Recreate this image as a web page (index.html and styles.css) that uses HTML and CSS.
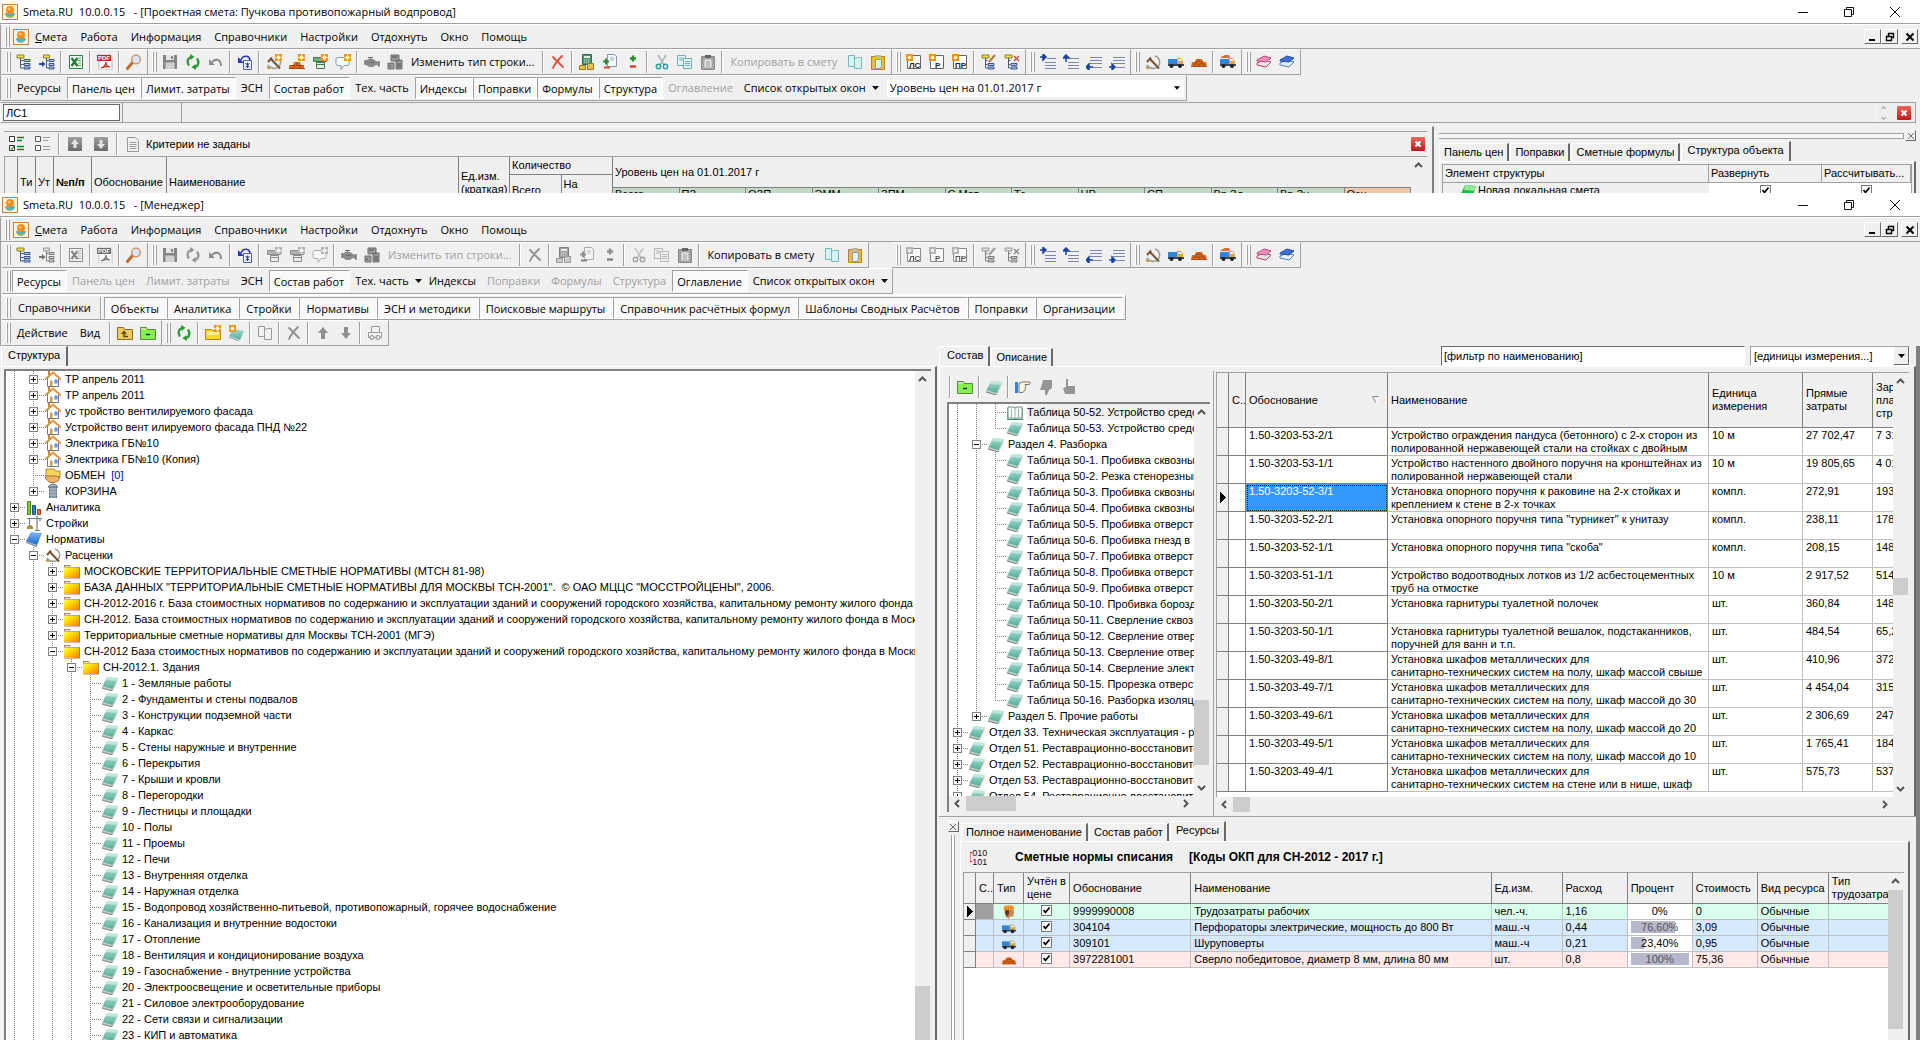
FILE: index.html
```html
<!DOCTYPE html>
<html lang="ru">
<head>
<meta charset="utf-8">
<title>Smeta.RU</title>
<link rel="stylesheet" href="styles.css">
</head>
<body>
<svg class="defs" aria-hidden="true">
<defs>
<linearGradient id="g-fold" x1="0" y1="0" x2="1" y2="1"><stop offset="0" stop-color="#ffff5a"/><stop offset=".4" stop-color="#ffd800"/><stop offset="1" stop-color="#ff7a00"/></linearGradient>
<linearGradient id="g-book" x1="0" y1="0" x2="0" y2="1"><stop offset="0" stop-color="#a9dccd"/><stop offset="1" stop-color="#4fae98"/></linearGradient>
<linearGradient id="g-blue" x1="0" y1="0" x2="0" y2="1"><stop offset="0" stop-color="#7db8f5"/><stop offset="1" stop-color="#1b66d0"/></linearGradient>
<linearGradient id="g-red" x1="0" y1="0" x2="0" y2="1"><stop offset="0" stop-color="#e86a5c"/><stop offset="1" stop-color="#c01818"/></linearGradient>
<linearGradient id="g-gray" x1="0" y1="0" x2="0" y2="1"><stop offset="0" stop-color="#a0a0a0"/><stop offset="1" stop-color="#6a6a6a"/></linearGradient>
</defs>
<symbol id="logo" viewBox="0 0 16 16"><rect x=".5" y=".5" width="15" height="15" fill="#fff3e2" stroke="#c8803c"/><path d="M3 9a5 5 0 0 0 10 0z" fill="#4fb3c0"/><path d="M5 12q3 3 6 0" fill="#8cc63f"/><circle cx="8" cy="6" r="4" fill="#ff8c1a"/><circle cx="7" cy="5" r="1.5" fill="#ffc36b"/></symbol>
<symbol id="tree" viewBox="0 0 16 16"><path d="M1 1h7v3H1z" fill="#e8e04a" stroke="#8a8420"/><path d="M4.500 4v10M4.500 6.500h3M4.500 10.500h3M4.500 14h3" stroke="#4a5a78" fill="none"/><path d="M8 5.500h6v2H8zM8 9.500h6v2H8zM8 13h6v2H8z" fill="#b9cbe8" stroke="#3a5590"/></symbol>
<symbol id="treein" viewBox="0 0 16 16"><path d="M4.500 1h6v3h-6z" fill="#e8e04a" stroke="#8a8420"/><path d="M7.500 4v10M7.500 6.500h2M7.500 14h2" stroke="#4a5a78" fill="none"/><path d="M10 5.500h5v2h-5zM10 9.500h5v2h-5zM10 13h5v2h-5z" fill="#b9cbe8" stroke="#3a5590"/><path d="M0 9h3V7l3.500 3L3 13v-2H0z" fill="#1d4fa8"/></symbol>
<symbol id="xls" viewBox="0 0 16 16"><path d="M1.500 1.500h13v13h-13z" fill="#eef7ee" stroke="#2f7d46"/><path d="M10 4h3M10 6.500h3M10 9h3M10 11.500h3" stroke="#58a36c"/><path d="M3.500 4l6 8M9.500 4l-6 8" stroke="#1e7a3a" stroke-width="2.200"/></symbol>
<symbol id="pdf" viewBox="0 0 16 16"><path d="M2 0h10l3 3v13H2z" fill="#fff" stroke="#bbb"/><path d="M0 1h14v6H0z" fill="#cc1f1f"/><text x="1" y="6" font-size="6" font-weight="700" fill="#fff">PDF</text><path d="M4 14c3-1 5-3 5-6 0 4 2 5 4 5-3-1-6 0-9 1z" fill="none" stroke="#cc1f1f" stroke-width="1.200"/></symbol>
<symbol id="find" viewBox="0 0 16 16"><path d="M1.500 14.500l5-6" stroke="#c26a28" stroke-width="3" stroke-linecap="round"/><circle cx="10" cy="5.500" r="4.300" fill="#d6e6fa" stroke="#d08a5a" stroke-width="1.300"/></symbol>
<symbol id="save" viewBox="0 0 16 16"><path d="M1 1h14v14H1z" fill="#858585"/><path d="M4 1h8v5H4z" fill="#e4e4e4"/><path d="M9 2h2v3H9z" fill="#858585"/><path d="M3.500 8.500h9V15h-9z" fill="#d0d0d0"/></symbol>
<symbol id="refresh" viewBox="0 0 16 16"><path d="M6 3C2.500 4 1.500 8 4 11.500M10 13c3.500-1 4.500-5 2-8.500" fill="none" stroke="#279a33" stroke-width="2.300"/><path d="M5 0l4.500 2.800L5.500 6zM11 16l-4.500-2.800L10.500 10z" fill="#279a33"/></symbol>
<symbol id="undo" viewBox="0 0 16 16"><path d="M4 8c4-4 9-3 9 4" fill="none" stroke="#8a8a8a" stroke-width="2"/><path d="M1 5v6h6z" fill="#8a8a8a"/></symbol>
<symbol id="undodoc" viewBox="0 0 16 16"><path d="M6.500 6.500h8v9h-8z" fill="#eef3ff" stroke="#5560a0"/><path d="M8.500 9l4 4.500M12.500 9l-4 4.500M10.500 8.500v5.500" stroke="#30407a"/><path d="M4 6c2-5 8-5 9 0" fill="none" stroke="#2a35c8" stroke-width="1.700"/><path d="M1 3v6h6z" fill="#2a35c8"/></symbol>
<symbol id="sun" viewBox="0 0 16 16"><path d="M9 0h7v7H9z" fill="#f5921e"/><circle cx="12.500" cy="3.500" r="2" fill="#fff3c0"/><path d="M12.500 0v7M9 3.500h7" stroke="#fff3c0" stroke-width=".7"/></symbol>
<symbol id="hammer" viewBox="0 0 16 16"><path d="M10 2c6 2 6 9 1 12-4 1-7 0-9-3" fill="none" stroke="#9a9f9a" stroke-width="1.500"/><path d="M5 5l9 9.500M6 3.500L2 8" stroke="#7a5433" stroke-width="2"/><path d="M1 13l3 1.500" stroke="#c59a4a" stroke-width="2"/></symbol>
<symbol id="hammernew" viewBox="0 0 16 16"><use href="#hammer"/><use href="#sun"/></symbol>
<symbol id="bricks" viewBox="0 0 16 16"><path d="M5 5h6l1 3h3l1 4.500H0L1 8h3z" fill="#e06c1c"/><path d="M0 12.500h16M2 10h12M4 7.500h8M8 5v3M5 8v2M11 8v2M3 10v2.500M8 10v2.500M13 10v2.500" stroke="#a8420a" stroke-width=".9"/></symbol>
<symbol id="bricksnew" viewBox="0 0 16 16"><path d="M5 8h6l1 3h3v4H0v-4h4z" fill="#e06c1c"/><path d="M0 14.500h16M2 11.500h12M8 8v3M5 11v3M11 11v3" stroke="#a8420a"/><use href="#sun"/></symbol>
<symbol id="shelf" viewBox="0 0 16 16"><path d="M1.500 3.500h13v4h-13z" fill="#6fae7a" stroke="#3f7a4c"/><path d="M4.500 8.500h8v6h-8z" fill="#e5eee6" stroke="#3f7a4c"/><path d="M4 10.500h9" stroke="#3f7a4c"/><use href="#sun"/></symbol>
<symbol id="note" viewBox="0 0 16 16"><path d="M3 3.500h9q2 0 2 2v4q0 2-2 2H9l-3 4v-4H3q-2 0-2-2v-4q0-2 2-2z" fill="#f6fbff" stroke="#8a9aa5"/><use href="#sun"/></symbol>
<symbol id="engine" viewBox="0 0 16 16"><path d="M1 7l3-2h5l3 2 3 1v4l-3-1-3 2H5l-4-3z" fill="#8c8c8c"/><path d="M4 3.500h5M6.500 3v2M1 6v5M5 8.500h5M15 7v6" stroke="#6a6a6a" stroke-width="1.200"/></symbol>
<symbol id="machine" viewBox="0 0 16 16"><path d="M4 1h8v6H4zM1 9h6v6H1zM9 6h6v9H9z" fill="#9a9a9a" stroke="#6f6f6f"/><path d="M5 3h5M3 11v2M11 9v5M13 9v5" stroke="#555"/></symbol>
<symbol id="del" viewBox="0 0 16 16"><path d="M3 3c3 3 6 6 10 10M12 2C8 6 5 9 3 14" fill="none" stroke="#e2503a" stroke-width="1.800" stroke-linecap="round"/></symbol>
<symbol id="calc" viewBox="0 0 16 16"><path d="M3.500.5h9v10h-9z" fill="#4e9a78" stroke="#2f6b50"/><path d="M5 2h6v2H5z" fill="#dff0da"/><path d="M5 6h6M5 8h6" stroke="#dff0da" stroke-dasharray="1 1"/><path d="M.5 11.500h6v4h-6zM8.500 9.500h6v6h-6z" fill="#e9c04a" stroke="#9a7a1e"/></symbol>
<symbol id="docpm" viewBox="0 0 16 16"><path d="M5.500.5h7l2 2v10h-9z" fill="#f4f7fb" stroke="#8a95a5"/><path d="M8 4h4M8 6h4" stroke="#9fb0c5"/><path d="M1 7.500h6M4 4.500v6" stroke="#2e8a2e" stroke-width="2"/><path d="M2 13.500h6" stroke="#d04a20" stroke-width="2"/></symbol>
<symbol id="pm" viewBox="0 0 16 16"><path d="M5 4.500h6M8 1.500v6" stroke="#2e8a2e" stroke-width="2.400"/><path d="M5 12.500h6" stroke="#c8402a" stroke-width="2.400"/></symbol>
<symbol id="cut" viewBox="0 0 16 16"><path d="M4 1l6 10M12 1L6 11" stroke="#a5b5b5" stroke-width="1.500"/><circle cx="4.500" cy="12.500" r="2.200" fill="none" stroke="#2aa0a8" stroke-width="1.400"/><circle cx="11.500" cy="12.500" r="2.200" fill="none" stroke="#2aa0a8" stroke-width="1.400"/></symbol>
<symbol id="copy" viewBox="0 0 16 16"><path d="M.5 1.500h8v10h-8z" fill="#e6f4f4" stroke="#6fb0b5"/><path d="M6.500 4.500h8v10h-8z" fill="#e6f4f4" stroke="#6fb0b5"/><path d="M8 7.500h5M8 9.500h5M8 11.500h5M2 4h4M2 6h4" stroke="#6fb0b5"/></symbol>
<symbol id="pasteg" viewBox="0 0 16 16"><path d="M1.500 2.500h13v13h-13z" fill="#a4a4a4" stroke="#888"/><path d="M5 1h6v3H5z" fill="#666"/><path d="M4.500 5.500h7v8h-7z" fill="#e6e6e6"/><path d="M6 8h4M6 10h4M6 12h4" stroke="#999"/></symbol>
<symbol id="copy2" viewBox="0 0 16 16"><path d="M1.500 1.500h6v11h-6zM7.500 4.500l3-1h4v11h-7z" fill="#d4f3f3" stroke="#74b8bc"/></symbol>
<symbol id="paste2" viewBox="0 0 16 16"><path d="M1.500 2.500h13v13h-13z" fill="#f1b93a" stroke="#b98218"/><path d="M5 1h6v3H5z" fill="#b9b9a0"/><path d="M5.500 5.500h6v7l-2 2h-4z" fill="#dff2f2" stroke="#7ba3a3"/></symbol>
<symbol id="docnew" viewBox="0 0 16 16"><path d="M1.500 1.500h13v13h-13z" fill="#fff" stroke="#666"/><path d="M0 0h7v7H0z" fill="#f5921e"/><circle cx="3.500" cy="3.500" r="1.800" fill="#fff3c0"/></symbol>
<symbol id="treeedit" viewBox="0 0 16 16"><path d="M1 1h7v3H1z" fill="#e8e04a" stroke="#8a8420"/><path d="M4.500 4v10h2M4.500 6.500h2M4.500 10.500h2" stroke="#4a5a78" fill="none"/><path d="M7 9.500h6v2H7zM7 13h6v2H7z" fill="#b9cbe8" stroke="#3a5590"/><path d="M8 8l6-7" stroke="#b5762a" stroke-width="2"/></symbol>
<symbol id="treedel" viewBox="0 0 16 16"><path d="M1 1h7v3H1z" fill="#e8e04a" stroke="#8a8420"/><path d="M4.500 4v10h2M4.500 6.500h2M4.500 10.500h2" stroke="#4a5a78" fill="none"/><path d="M7 9.500h6v2H7zM7 13h6v2H7z" fill="#b9cbe8" stroke="#3a5590"/><path d="M10 2l5 5M15 2l-5 5" stroke="#d8382a" stroke-width="1.200"/></symbol>
<symbol id="ind1" viewBox="0 0 16 16"><path d="M7 4.500h9M5 8.500h11M5 11.500h11M5 14.500h11" stroke="#7d86a8"/><path d="M0 3h4M3 0l3 3-3 3z" stroke="#1c3fa8" stroke-width="1.500" fill="#1c3fa8"/></symbol>
<symbol id="ind2" viewBox="0 0 16 16"><path d="M7 4.500h9M5 8.500h11M5 11.500h11M5 14.500h11" stroke="#7d86a8"/><path d="M0 4l3-3 3 3zM3 3v5" stroke="#1c3fa8" stroke-width="1.500" fill="#1c3fa8"/></symbol>
<symbol id="ind3" viewBox="0 0 16 16"><path d="M4 3.500h12M4 6.500h12M4 9.500h12M7 13.500h9" stroke="#7d86a8"/><path d="M3 10l-3 3 3 3zM3 13h4" stroke="#1c3fa8" stroke-width="1.500" fill="#1c3fa8"/></symbol>
<symbol id="ind4" viewBox="0 0 16 16"><path d="M4 3.500h12M4 6.500h12M4 9.500h12M7 13.500h9" stroke="#7d86a8"/><path d="M3 10l3 3-3 3zM0 13h4" stroke="#1c3fa8" stroke-width="1.500" fill="#1c3fa8"/></symbol>
<symbol id="truck" viewBox="0 0 16 16"><path d="M0 5h9v5H0z" fill="#2f86d8"/><path d="M9 4h4l2 3v4H9z" fill="#d8a843"/><path d="M10 5h3l1 2h-4z" fill="#e8f4ff"/><path d="M0 10h16v2H0z" fill="#3b4a5a"/><circle cx="3.500" cy="12" r="2" fill="#222"/><circle cx="12" cy="12" r="2" fill="#222"/></symbol>
<symbol id="truck2" viewBox="0 0 16 16"><path d="M1 3l4-2h4l1 3H1z" fill="#e06c1c"/><use href="#truck"/></symbol>
<symbol id="stackr" viewBox="0 0 16 16"><path d="M1 9l7-3 7 2-5 5-9-2z" fill="#e4e6f2" stroke="#c0405a"/><path d="M1 6l7-4 7 2-5 4-9-1z" fill="#f291b8" stroke="#c04a78"/></symbol>
<symbol id="stackb" viewBox="0 0 16 16"><path d="M1 9l7-3 7 2-5 5-9-2z" fill="#e4eefa" stroke="#4a7fc0"/><path d="M1 6l7-4 7 2-5 4-9-1z" fill="#3f6fd8" stroke="#2a4aa0"/></symbol>
<symbol id="foldup" viewBox="0 0 16 16"><path d="M.5 2.500h6l1 2h8v10H.5z" fill="#f0cc5e" stroke="#8a6d20"/><path d="M11 11.500H7V8M4.800 9L7 6.500 9.200 9" fill="none" stroke="#5a4410" stroke-width="1.400"/></symbol>
<symbol id="foldminus" viewBox="0 0 16 16"><path d="M.5 2.500h6l1 2h8v10H.5z" fill="#84f04e" stroke="#5a8a40"/><path d="M1 3h5l1 2H1z" fill="#c9dfc0"/><path d="M6 9.500h4" stroke="#222" stroke-width="1.400"/></symbol>
<symbol id="foldernew" viewBox="0 0 16 16"><path d="M.5 4.500h6l1 1h8v9H.5z" fill="#ffd52e" stroke="#b08a10"/><path d="M2 7h12v3H2z" fill="#fff1a0"/><use href="#sun"/></symbol>
<symbol id="book" viewBox="0 0 16 16"><path d="M0 12l1-2 9 3 5-9 1 1-5 11-11-3z" fill="#c9ccc9"/><path d="M0 13l10.500 3" stroke="#6f7f7a" fill="none"/><path d="M5 2l11 1-5.500 11L.5 11z" fill="url(#g-book)"/><path d="M5 2l11 1-1.500 3L4 5z" fill="#cdeee4" opacity=".7"/></symbol>
<symbol id="bookblue" viewBox="0 0 16 16"><path d="M0 11l11 4.500" stroke="#9aa3ad" stroke-width="2"/><path d="M5 1l11 1-5 12L0 10z" fill="url(#g-blue)"/></symbol>
<symbol id="booknew" viewBox="0 0 16 16"><path d="M5 4l11 2-4 9-11-4z" fill="url(#g-book)"/><path d="M1 12l10 4" stroke="#8b9a95"/><path d="M1 0h7v7H1z" fill="#f5921e"/><circle cx="4.500" cy="3.500" r="2" fill="#fff3c0"/></symbol>
<symbol id="open" viewBox="0 0 16 16"><path d="M1 3h5l2 1 2-1h5v11h-5l-2 1-2-1H1z" fill="#fff" stroke="#5f8f82"/><path d="M8 4v11M4.500 5v8M11.500 5v8" stroke="#8fb5aa"/><path d="M0 4v11.500h16V4" fill="none" stroke="#3f8a76"/></symbol>
<symbol id="pages" viewBox="0 0 16 16"><path d="M1.500 1.500h6v10h-6zM7.500 4.500l3-1h4v11h-7z" fill="#f2f2f2" stroke="#9a9a9a"/></symbol>
<symbol id="up" viewBox="0 0 16 16"><path d="M8 2l5 6h-3v6H6V8H3z" fill="#8f8f8f"/></symbol>
<symbol id="down" viewBox="0 0 16 16"><path d="M8 14l5-6h-3V2H6v6H3z" fill="#8f8f8f"/></symbol>
<symbol id="print" viewBox="0 0 16 16"><path d="M4.500 7V1.500h8V7M1.500 7.500h13v5h-13z" fill="#f2f2f2" stroke="#999"/><circle cx="5" cy="12.500" r="2" fill="#eee" stroke="#888"/><circle cx="11" cy="12.500" r="2" fill="#eee" stroke="#888"/></symbol>
<symbol id="house" viewBox="0 0 16 16"><path d="M2.500 7v8.500h11V7L8 2z" fill="#fff" stroke="#777"/><path d="M3 0h2v4H3z" fill="#c8803c"/><path d="M0 8.500L8 1.500l8 7" fill="none" stroke="#e0963c" stroke-width="1.700"/><path d="M5 9.500h2.500V15H5z" fill="#d99a48"/><path d="M9.500 8.500h3v4h-3z" fill="#5a90dd"/></symbol>
<symbol id="hand" viewBox="0 0 16 16"><path d="M1 2h8l2 2h4v6H1z" fill="#f6d45c" stroke="#b98b20"/><path d="M0 9h10l5 1-2 4-4 1.500H5L1 12z" fill="#f0b468" stroke="#a8702a"/></symbol>
<symbol id="bin" viewBox="0 0 16 16"><path d="M4 4h8v11H4z" fill="#5d6e80"/><path d="M4 6h8M4 9h8M4 12h8M6 4v11M8 4v11M10 4v11" stroke="#c7d2dc" stroke-width=".8"/><path d="M3 4q5-6 10 0z" fill="#a9bac8" stroke="#5d6e80"/></symbol>
<symbol id="chart" viewBox="0 0 16 16"><path d="M1.500 2.500h3v13h-3z" fill="#7fcf28" stroke="#4a8a10"/><path d="M6.500 6.500h3v9h-3z" fill="#2f7de0" stroke="#1c4f98"/><path d="M11.500 10.500h3v5h-3z" fill="#f06a48" stroke="#b03a1e"/></symbol>
<symbol id="crane" viewBox="0 0 16 16"><path d="M1 3.500h15M11 1v14M3.500 3.500v6M9 15.500h5M14 3v3" stroke="#6f7f86" stroke-width="1.200" fill="none"/><path d="M1 12l2-2h2l2 2v2H1z" fill="#b0883a"/></symbol>
<symbol id="folder" viewBox="0 0 16 16"><path d="M0 2h6l1 2h9v11.500H0z" fill="#9a8a5a"/><path d="M1 3h5l1 1H1z" fill="#e8dcb0"/><path d="M0 4.500h15V15H0z" fill="url(#g-fold)"/></symbol>
<symbol id="cube" viewBox="0 0 16 16"><path d="M5 1l11 1-4 12L0 12z" fill="#22b83a"/><path d="M5 1l11 1-2 5L4 6z" fill="#8fe89a"/></symbol>
<symbol id="check1" viewBox="0 0 16 16"><path d="M.5.5h5v5h-5zM.5 9.500h5v5h-5z" fill="#fff" stroke="#333"/><path d="M2 12l1 1.500L5 10" stroke="#1c7a2a" fill="none"/><path d="M8 1.500h7M8 4.500h5M8 10.500h7M8 13.500h7" stroke="#1c7a2a" stroke-width="1.300"/></symbol>
<symbol id="check2" viewBox="0 0 16 16"><path d="M.5.5h5v5h-5zM.5 9.500h5v5h-5z" fill="#fff" stroke="#555"/><path d="M8 1.500h7M8 4.500h5M8 10.500h7M8 13.500h7" stroke="#999" stroke-width="1.200"/></symbol>
<symbol id="boxup" viewBox="0 0 16 16"><rect x="1" y="1" width="14" height="14" rx="1" fill="url(#g-gray)"/><path d="M8 3l4 5H9.500v4h-3V8H4z" fill="#e4e4e4"/></symbol>
<symbol id="boxdown" viewBox="0 0 16 16"><rect x="1" y="1" width="14" height="14" rx="1" fill="url(#g-gray)"/><path d="M8 13l4-5H9.500V4h-3v4H4z" fill="#e4e4e4"/></symbol>
<symbol id="doc" viewBox="0 0 16 16"><path d="M2.500 1.500h8l3 3v11h-11z" fill="#f2f2f2" stroke="#999"/><path d="M4.500 6.500h7M4.500 8.500h7M4.500 10.500h7M4.500 12.500h7" stroke="#999"/></symbol>
<symbol id="point" viewBox="0 0 16 16"><path d="M0 3h3v11H0z" fill="#2f86e8"/><path d="M4 4.500L7 3h8q1 2-1 2.500H10l1 2-1 1.500.5 1.500L9 12l-1 1.500H4z" fill="#fff3d8" stroke="#777"/></symbol>
<symbol id="thumbd" viewBox="0 0 16 16"><path d="M5 1h9v8l-3 2-2 5H7v-5H2L4 5z" fill="#969696"/></symbol>
<symbol id="thumbu" viewBox="0 0 16 16"><path d="M5 0h2v7h7v8H4L2 9l3-1z" fill="#969696"/></symbol>
<symbol id="digits" viewBox="0 0 16 16"><path d="M2 4H0v8h2" fill="none" stroke="#d03030"/><text x="2" y="7" font-size="8" fill="#111">010</text><text x="2" y="15" font-size="8" fill="#111">101</text></symbol>
<symbol id="worker" viewBox="0 0 16 16"><path d="M4 5h9l1 4-1 1v3H9l-1 3-4-3V9L3 7z" fill="#c98352"/><path d="M4 5h4v5l-2 3-3-4z" fill="#6b3318"/><path d="M2 6q-2-6 6-6 6 0 6 5H9L6 6z" fill="#f58a1c"/><path d="M4 2q3-2 6-1" stroke="#ffd08a" fill="none"/></symbol>
<symbol id="tri" viewBox="0 0 7 4"><path d="M0 0h7L3.500 4z" fill="#111"/></symbol>
<symbol id="x" viewBox="0 0 14 14"><rect width="14" height="14" rx="1" fill="url(#g-red)"/><path d="M4.500 4.500l5 5M9.500 4.500l-5 5" stroke="#fff" stroke-width="2"/></symbol>
<symbol id="cu" viewBox="0 0 15 17"><path d="M4 10l3.500-3.500L11 10" fill="none" stroke="#555" stroke-width="2"/></symbol>
<symbol id="cd" viewBox="0 0 15 17"><path d="M4 7l3.500 3.500L11 7" fill="none" stroke="#555" stroke-width="2"/></symbol>
<symbol id="cl" viewBox="0 0 17 15"><path d="M10 4L6.500 7.500 10 11" fill="none" stroke="#555" stroke-width="2"/></symbol>
<symbol id="cr" viewBox="0 0 17 15"><path d="M7 4l3.500 3.500L7 11" fill="none" stroke="#555" stroke-width="2"/></symbol>
<symbol id="wmin" viewBox="0 0 10 10"><path d="M0 5.500h10" stroke="#111"/></symbol>
<symbol id="wres" viewBox="0 0 10 10"><path d="M.5 2.500h7v7h-7zM2.500 2.500v-2h7v7h-2" fill="none" stroke="#111"/></symbol>
<symbol id="wcls" viewBox="0 0 10 10"><path d="M0 0l10 10M10 0L0 10" stroke="#111"/></symbol>
<symbol id="mmin" viewBox="0 0 10 10"><path d="M1 8h6" stroke="#000" stroke-width="2"/></symbol>
<symbol id="mres" viewBox="0 0 10 10"><path d="M1.500 4.500h5v4h-5zM3.500 4V1.500h5v4H7M1 4.500h6M3 1.500h6" fill="none" stroke="#000" stroke-width="1.400"/></symbol>
<symbol id="mcls" viewBox="0 0 10 10"><path d="M1.500 1.500l7 7M8.500 1.500l-7 7" stroke="#000" stroke-width="2"/></symbol>
</svg>

<section class="win win-back">
  <header class="title"><svg><use href="#logo"/></svg><h1>Smeta.RU&nbsp; 10.0.0.15 &nbsp; - [Проектная смета: Пучкова противопожарный водпровод]</h1>
    <div class="wctl"><button aria-label="Свернуть"><svg><use href="#wmin"/></svg></button><button aria-label="Восстановить"><svg><use href="#wres"/></svg></button><button aria-label="Закрыть"><svg><use href="#wcls"/></svg></button></div></header>
  <nav class="menu grip"><svg><use href="#logo"/></svg><button><u>С</u>мета</button><button>Работа</button><button>Информация</button><button>Справочники</button><button>Настройки</button><button>Отдохнуть</button><button>Окно</button><button>Помощь</button>
    <div class="mctl"><button aria-label="Свернуть"><svg><use href="#mmin"/></svg></button><button aria-label="Восстановить"><svg><use href="#mres"/></svg></button><button aria-label="Закрыть"><svg><use href="#mcls"/></svg></button></div></nav>
  <div class="bar">
    <div class="grp grip"><button class="b"><svg><use href="#tree"/></svg></button><button class="b"><svg><use href="#treein"/></svg></button><hr><button class="b"><svg><use href="#xls"/></svg></button><hr><button class="b"><svg><use href="#pdf"/></svg></button><hr><button class="b"><svg><use href="#find"/></svg></button></div>
    <div class="grp grip"><button class="b"><svg><use href="#save"/></svg></button><button class="b"><svg><use href="#refresh"/></svg></button><button class="b"><svg><use href="#undo"/></svg></button><hr><button class="b"><svg><use href="#undodoc"/></svg></button><hr><button class="b"><svg><use href="#hammernew"/></svg></button><button class="b"><svg><use href="#bricksnew"/></svg></button><button class="b"><svg><use href="#shelf"/></svg></button><button class="b"><svg><use href="#note"/></svg></button><hr><button class="b"><svg><use href="#engine"/></svg></button><button class="b"><svg><use href="#machine"/></svg></button><button class="t">Изменить тип строки...</button><hr><button class="b"><svg><use href="#del"/></svg></button><hr><button class="b"><svg><use href="#calc"/></svg></button><button class="b"><svg><use href="#docpm"/></svg></button><button class="b"><svg><use href="#pm"/></svg></button><hr><button class="b"><svg><use href="#cut"/></svg></button><button class="b"><svg><use href="#copy"/></svg></button><button class="b"><svg><use href="#pasteg"/></svg></button><hr><button class="t" disabled>Копировать в смету</button><button class="b"><svg><use href="#copy2"/></svg></button><button class="b"><svg><use href="#paste2"/></svg></button></div>
    <div class="grp grip"><button class="b dn"><svg><use href="#docnew"/><text x="3" y="14">ЛС</text></svg></button><button class="b dn"><svg><use href="#docnew"/><text x="6" y="14">Р</text></svg></button><button class="b dn"><svg><use href="#docnew"/><text x="3" y="14">ПР</text></svg></button><hr><button class="b"><svg><use href="#treeedit"/></svg></button><button class="b"><svg><use href="#treedel"/></svg></button></div>
    <div class="grp grip"><button class="b"><svg><use href="#ind1"/></svg></button><button class="b"><svg><use href="#ind2"/></svg></button><button class="b"><svg><use href="#ind3"/></svg></button><button class="b"><svg><use href="#ind4"/></svg></button></div>
    <div class="grp grip"><button class="b"><svg><use href="#hammer"/></svg></button><button class="b"><svg><use href="#truck"/></svg></button><button class="b"><svg><use href="#bricks"/></svg></button><hr><button class="b"><svg><use href="#truck2"/></svg></button></div>
    <div class="grp grip"><button class="b"><svg><use href="#stackr"/></svg></button><button class="b"><svg><use href="#stackb"/></svg></button></div>
  </div>
  <div class="bar">
    <div class="grp grip"><button class="t">Ресурсы</button><button class="t on">Панель цен</button><button class="t on">Лимит. затраты</button><button class="t">ЭСН</button><button class="t on">Состав работ</button><button class="t">Тех. часть</button><button class="t on">Индексы</button><button class="t on">Поправки</button><button class="t on">Формулы</button><button class="t on">Структура</button><button class="t" disabled>Оглавление</button><button class="t dd">Список открытых окон<svg><use href="#tri"/></svg></button><select class="level" aria-label="Уровень цен"><option>Уровень цен на 01.01.2017 г</option></select></div>
  </div>
  <div class="formula"><input aria-label="Ячейка" value="ЛС1"><span class="cell"></span><span class="fill"></span><span class="spin"><svg><use href="#cu"/></svg><svg><use href="#cd"/></svg></span><button class="redx" aria-label="Закрыть"><svg><use href="#x"/></svg></button></div>
  <div class="back">
    <div class="est">
      <div class="crit"><button class="b"><svg><use href="#check1"/></svg></button><button class="b"><svg><use href="#check2"/></svg></button><hr><button class="b"><svg><use href="#boxup"/></svg></button><button class="b"><svg><use href="#boxdown"/></svg></button><hr><svg><use href="#doc"/></svg><span>Критерии не заданы</span><button class="redx" aria-label="Закрыть"><svg><use href="#x"/></svg></button></div>
      <div class="esthead">
        <div class="ec e0"></div><div class="ec e1">Ти</div><div class="ec e1">Ут</div><div class="ec e2"><b>№п/п</b></div><div class="ec e3">Обоснование</div><div class="ec e4">Наименование</div><div class="ec e5">Ед.изм.<br>(краткая)</div>
        <div class="qty"><div>Количество</div><p><span>Всего</span><span>На</span></p></div>
        <div class="lvl"><div>Уровень цен на 01.01.2017 г</div><p><span>Всего</span><span>ПЗ</span><span>ОЗП</span><span>ЭММ</span><span>ЗПМ</span><span>С.Мат</span><span>Тз</span><span>НР</span><span>СП</span><span>Вр.Зд</span><span>Вр.Зу</span><span class="or">Осн</span></p></div>
        <div class="vs"><svg class="cv"><use href="#cu"/></svg></div>
      </div>
    </div>
    <div class="side">
      <div class="dock"><span></span><button aria-label="Закрыть"><svg><use href="#wcls"/></svg></button></div>
      <div class="tabs"><button class="tab">Панель цен</button><button class="tab">Поправки</button><button class="tab">Сметные формулы</button><button class="tab sel">Структура объекта</button></div>
      <div class="page"><table class="obj"><thead><tr><th>Элемент структуры</th><th class="o2">Развернуть</th><th class="o3">Рассчитывать...</th></tr></thead><tbody><tr><td class="nm"><svg><use href="#cube"/></svg>Новая локальная смета</td><td><input type="checkbox" checked aria-label="Развернуть"></td><td><input type="checkbox" checked aria-label="Рассчитывать"></td></tr></tbody></table></div>
    </div>
  </div>
</section>

<section class="win win-front">
  <header class="title"><svg><use href="#logo"/></svg><h1>Smeta.RU&nbsp; 10.0.0.15 &nbsp; - [Менеджер]</h1>
    <div class="wctl"><button aria-label="Свернуть"><svg><use href="#wmin"/></svg></button><button aria-label="Восстановить"><svg><use href="#wres"/></svg></button><button aria-label="Закрыть"><svg><use href="#wcls"/></svg></button></div></header>
  <nav class="menu grip"><svg><use href="#logo"/></svg><button><u>С</u>мета</button><button>Работа</button><button>Информация</button><button>Справочники</button><button>Настройки</button><button>Отдохнуть</button><button>Окно</button><button>Помощь</button>
    <div class="mctl"><button aria-label="Свернуть"><svg><use href="#mmin"/></svg></button><button aria-label="Восстановить"><svg><use href="#mres"/></svg></button><button aria-label="Закрыть"><svg><use href="#mcls"/></svg></button></div></nav>
  <div class="bar">
    <div class="grp grip"><button class="b"><svg><use href="#tree"/></svg></button><button class="b" disabled><svg><use href="#treein"/></svg></button><hr><button class="b" disabled><svg><use href="#xls"/></svg></button><hr><button class="b" disabled><svg><use href="#pdf"/></svg></button><hr><button class="b"><svg><use href="#find"/></svg></button></div>
    <div class="grp grip"><button class="b"><svg><use href="#save"/></svg></button><button class="b" disabled><svg><use href="#refresh"/></svg></button><button class="b"><svg><use href="#undo"/></svg></button><hr><button class="b"><svg><use href="#undodoc"/></svg></button><hr><button class="b" disabled><svg><use href="#shelf"/></svg></button><button class="b" disabled><svg><use href="#shelf"/></svg></button><button class="b" disabled><svg><use href="#note"/></svg></button><hr><button class="b"><svg><use href="#engine"/></svg></button><button class="b"><svg><use href="#machine"/></svg></button><button class="t" disabled>Изменить тип строки...</button><hr><button class="b" disabled><svg><use href="#del"/></svg></button><hr><button class="b" disabled><svg><use href="#calc"/></svg></button><button class="b" disabled><svg><use href="#docpm"/></svg></button><button class="b" disabled><svg><use href="#pm"/></svg></button><hr><button class="b" disabled><svg><use href="#cut"/></svg></button><button class="b" disabled><svg><use href="#copy"/></svg></button><button class="b"><svg><use href="#pasteg"/></svg></button><hr><button class="t">Копировать в смету</button><button class="b"><svg><use href="#copy2"/></svg></button><button class="b"><svg><use href="#paste2"/></svg></button></div>
    <div class="grp grip apart"><button class="b dn" disabled><svg><use href="#docnew"/><text x="3" y="14">ЛС</text></svg></button><button class="b dn" disabled><svg><use href="#docnew"/><text x="6" y="14">Р</text></svg></button><button class="b dn" disabled><svg><use href="#docnew"/><text x="3" y="14">ПР</text></svg></button><hr><button class="b" disabled><svg><use href="#treeedit"/></svg></button><button class="b" disabled><svg><use href="#treedel"/></svg></button></div>
    <div class="grp grip"><button class="b"><svg><use href="#ind1"/></svg></button><button class="b"><svg><use href="#ind2"/></svg></button><button class="b"><svg><use href="#ind3"/></svg></button><button class="b"><svg><use href="#ind4"/></svg></button></div>
    <div class="grp grip"><button class="b"><svg><use href="#hammer"/></svg></button><button class="b"><svg><use href="#truck"/></svg></button><button class="b"><svg><use href="#bricks"/></svg></button><hr><button class="b"><svg><use href="#truck2"/></svg></button></div>
    <div class="grp grip"><button class="b"><svg><use href="#stackr"/></svg></button><button class="b"><svg><use href="#stackb"/></svg></button></div>
  </div>
  <div class="bar">
    <div class="grp grip"><button class="t on">Ресурсы</button><button class="t" disabled>Панель цен</button><button class="t" disabled>Лимит. затраты</button><button class="t">ЭСН</button><button class="t on">Состав работ</button><button class="t dd">Тех. часть<svg><use href="#tri"/></svg></button><button class="t">Индексы</button><button class="t" disabled>Поправки</button><button class="t" disabled>Формулы</button><button class="t" disabled>Структура</button><button class="t on">Оглавление</button><button class="t dd">Список открытых окон<svg><use href="#tri"/></svg></button></div>
  </div>
  <div class="bar cat">
    <div class="grp grip"><button class="t">Справочники</button><hr><button class="t on">Объекты</button><button class="t on">Аналитика</button><button class="t on">Стройки</button><button class="t on">Нормативы</button><button class="t on">ЭСН и методики</button><button class="t on">Поисковые маршруты</button><button class="t on">Справочник расчётных формул</button><button class="t on">Шаблоны Сводных Расчётов</button><button class="t on">Поправки</button><button class="t on">Организации</button></div>
  </div>
  <div class="bar">
    <div class="grp grip act"><button class="t">Действие</button><button class="t">Вид</button><hr><button class="b"><svg><use href="#foldup"/></svg></button><button class="b"><svg><use href="#foldminus"/></svg></button></div>
    <div class="grp grip"><button class="b"><svg><use href="#refresh"/></svg></button><hr><button class="b"><svg><use href="#foldernew"/></svg></button><button class="b"><svg><use href="#booknew"/></svg></button><hr><button class="b"><svg><use href="#pages"/></svg></button><hr><button class="b" disabled><svg><use href="#del"/></svg></button><hr><button class="b"><svg><use href="#up"/></svg></button><button class="b"><svg><use href="#down"/></svg></button><hr><button class="b"><svg><use href="#print"/></svg></button></div>
  </div>
  <main class="work">
    <section class="left">
      <div class="tabs"><button class="tab sel">Структура</button></div>
      <div class="page"><div class="sunk">
        <ul class="tv">
          <li><ul>
            <li><div class="r"><button class="ex p"></button><svg><use href="#house"/></svg>ТР апрель 2011</div></li>
            <li><div class="r"><button class="ex p"></button><svg><use href="#house"/></svg>ТР апрель 2011</div></li>
            <li><div class="r"><button class="ex p"></button><svg><use href="#house"/></svg>ус тройство вентилируемого фасада</div></li>
            <li><div class="r"><button class="ex p"></button><svg><use href="#house"/></svg>Устройство вент илируемого фасада ПНД №22</div></li>
            <li><div class="r"><button class="ex p"></button><svg><use href="#house"/></svg>Электрика ГБ№10</div></li>
            <li><div class="r"><button class="ex p"></button><svg><use href="#house"/></svg>Электрика ГБ№10 (Копия)</div></li>
            <li><div class="r lf"><svg><use href="#hand"/></svg>ОБМЕН <span class="cnt">[0]</span></div></li>
            <li class="last"><div class="r"><button class="ex p"></button><svg><use href="#bin"/></svg>КОРЗИНА</div></li>
          </ul></li>
          <li><div class="r"><button class="ex p"></button><svg><use href="#chart"/></svg>Аналитика</div></li>
          <li><div class="r"><button class="ex p"></button><svg><use href="#crane"/></svg>Стройки</div></li>
          <li><div class="r"><button class="ex"></button><svg><use href="#bookblue"/></svg>Нормативы</div>
            <ul><li><div class="r"><button class="ex"></button><svg><use href="#hammer"/></svg>Расценки</div>
              <ul>
                <li><div class="r"><button class="ex p"></button><svg><use href="#folder"/></svg>МОСКОВСКИЕ ТЕРРИТОРИАЛЬНЫЕ СМЕТНЫЕ НОРМАТИВЫ (МТСН 81-98)</div></li>
                <li><div class="r"><button class="ex p"></button><svg><use href="#folder"/></svg>БАЗА ДАННЫХ "ТЕРРИТОРИАЛЬНЫЕ СМЕТНЫЕ НОРМАТИВЫ ДЛЯ МОСКВЫ ТСН-2001".&nbsp; © ОАО МЦЦС "МОССТРОЙЦЕНЫ", 2006.</div></li>
                <li><div class="r"><button class="ex p"></button><svg><use href="#folder"/></svg>СН-2012-2016 г. База стоимостных нормативов по содержанию и эксплуатации зданий и сооружений городского хозяйства, капитальному ремонту жилого фонда</div></li>
                <li><div class="r"><button class="ex p"></button><svg><use href="#folder"/></svg>СН-2012. База стоимостных нормативов по содержанию и эксплуатации зданий и сооружений городского хозяйства, капитальному ремонту жилого фонда в Москве</div></li>
                <li><div class="r"><button class="ex p"></button><svg><use href="#folder"/></svg>Территориальные сметные нормативы для Москвы ТСН-2001 (МГЭ)</div></li>
                <li><div class="r"><button class="ex"></button><svg><use href="#folder"/></svg>СН-2012 База стоимостных нормативов по содержанию и эксплуатации зданий и сооружений городского хозяйства, капитальному ремонту жилого фонда в Москве</div>
                  <ul><li><div class="r"><button class="ex"></button><svg><use href="#folder"/></svg>СН-2012.1. Здания</div>
                    <ul>
                      <li><div class="r lf"><svg><use href="#book"/></svg>1 - Земляные работы</div></li>
                      <li><div class="r lf"><svg><use href="#book"/></svg>2 - Фундаменты и стены подвалов</div></li>
                      <li><div class="r lf"><svg><use href="#book"/></svg>3 - Конструкции подземной части</div></li>
                      <li><div class="r lf"><svg><use href="#book"/></svg>4 - Каркас</div></li>
                      <li><div class="r lf"><svg><use href="#book"/></svg>5 - Стены наружные и внутренние</div></li>
                      <li><div class="r lf"><svg><use href="#book"/></svg>6 - Перекрытия</div></li>
                      <li><div class="r lf"><svg><use href="#book"/></svg>7 - Крыши и кровли</div></li>
                      <li><div class="r lf"><svg><use href="#book"/></svg>8 - Перегородки</div></li>
                      <li><div class="r lf"><svg><use href="#book"/></svg>9 - Лестницы и площадки</div></li>
                      <li><div class="r lf"><svg><use href="#book"/></svg>10 - Полы</div></li>
                      <li><div class="r lf"><svg><use href="#book"/></svg>11 - Проемы</div></li>
                      <li><div class="r lf"><svg><use href="#book"/></svg>12 - Печи</div></li>
                      <li><div class="r lf"><svg><use href="#book"/></svg>13 - Внутренняя отделка</div></li>
                      <li><div class="r lf"><svg><use href="#book"/></svg>14 - Наружная отделка</div></li>
                      <li><div class="r lf"><svg><use href="#book"/></svg>15 - Водопровод хозяйственно-питьевой, противопожарный, горячее водоснабжение</div></li>
                      <li><div class="r lf"><svg><use href="#book"/></svg>16 - Канализация и внутренние водостоки</div></li>
                      <li><div class="r lf"><svg><use href="#book"/></svg>17 - Отопление</div></li>
                      <li><div class="r lf"><svg><use href="#book"/></svg>18 - Вентиляция и кондиционирование воздуха</div></li>
                      <li><div class="r lf"><svg><use href="#book"/></svg>19 - Газоснабжение - внутренние устройства</div></li>
                      <li><div class="r lf"><svg><use href="#book"/></svg>20 - Электроосвещение и осветительные приборы</div></li>
                      <li><div class="r lf"><svg><use href="#book"/></svg>21 - Силовое электрооборудование</div></li>
                      <li><div class="r lf"><svg><use href="#book"/></svg>22 - Сети связи и сигнализации</div></li>
                      <li><div class="r lf"><svg><use href="#book"/></svg>23 - КИП и автоматика</div></li>
                    </ul></li></ul></li>
              </ul></li></ul></li>
        </ul>
        <div class="vs"><svg class="cv"><use href="#cu"/></svg><div class="thumb th-main"></div></div>
      </div></div>
    </section>

    <section class="right">
      <div class="tabs"><button class="tab sel">Состав</button><button class="tab">Описание</button>
        <div class="filters"><input class="flt" aria-label="Фильтр по наименованию" value="[фильтр по наименованию]"><select class="unit" aria-label="Единицы измерения"><option>[единицы измерения...]</option></select></div></div>
      <div class="page upper">
        <div class="comp">
          <div class="mini"><hr><button class="b"><svg><use href="#foldminus"/></svg></button><hr><button class="b"><svg><use href="#book"/></svg></button><hr><button class="b"><svg><use href="#point"/></svg></button><button class="b"><svg><use href="#thumbd"/></svg></button><button class="b"><svg><use href="#thumbu"/></svg></button></div>
          <div class="sunk">
            <div class="tvcol">
              <ul class="tv">
                <li><ul>
                  <li><ul>
                    <li><div class="r lf"><svg><use href="#open"/></svg><span class="cur">Таблица 50-52. Устройство средств</span></div></li>
                    <li class="last"><div class="r lf"><svg><use href="#book"/></svg>Таблица 50-53. Устройство средств</div></li>
                  </ul></li>
                  <li><div class="r"><button class="ex"></button><svg><use href="#book"/></svg>Раздел 4. Разборка</div>
                    <ul>
                      <li><div class="r lf"><svg><use href="#book"/></svg>Таблица 50-1. Пробивка сквозных</div></li>
                      <li><div class="r lf"><svg><use href="#book"/></svg>Таблица 50-2. Резка стенорезными</div></li>
                      <li><div class="r lf"><svg><use href="#book"/></svg>Таблица 50-3. Пробивка сквозных</div></li>
                      <li><div class="r lf"><svg><use href="#book"/></svg>Таблица 50-4. Пробивка сквозных</div></li>
                      <li><div class="r lf"><svg><use href="#book"/></svg>Таблица 50-5. Пробивка отверстий</div></li>
                      <li><div class="r lf"><svg><use href="#book"/></svg>Таблица 50-6. Пробивка гнезд в</div></li>
                      <li><div class="r lf"><svg><use href="#book"/></svg>Таблица 50-7. Пробивка отверстий</div></li>
                      <li><div class="r lf"><svg><use href="#book"/></svg>Таблица 50-8. Пробивка отверстий</div></li>
                      <li><div class="r lf"><svg><use href="#book"/></svg>Таблица 50-9. Пробивка отверстий</div></li>
                      <li><div class="r lf"><svg><use href="#book"/></svg>Таблица 50-10. Пробивка борозд</div></li>
                      <li><div class="r lf"><svg><use href="#book"/></svg>Таблица 50-11. Сверление сквозных</div></li>
                      <li><div class="r lf"><svg><use href="#book"/></svg>Таблица 50-12. Сверление отверстий</div></li>
                      <li><div class="r lf"><svg><use href="#book"/></svg>Таблица 50-13. Сверление отверстий</div></li>
                      <li><div class="r lf"><svg><use href="#book"/></svg>Таблица 50-14. Сверление электро</div></li>
                      <li><div class="r lf"><svg><use href="#book"/></svg>Таблица 50-15. Прорезка отверстий</div></li>
                      <li class="last"><div class="r lf"><svg><use href="#book"/></svg>Таблица 50-16. Разборка изоляции</div></li>
                    </ul></li>
                  <li class="last"><div class="r"><button class="ex p"></button><svg><use href="#book"/></svg>Раздел 5. Прочие работы</div></li>
                </ul></li>
                <li><div class="r"><button class="ex p"></button><svg><use href="#book"/></svg>Отдел 33. Техническая эксплуатация - ремонт</div></li>
                <li><div class="r"><button class="ex p"></button><svg><use href="#book"/></svg>Отдел 51. Реставрационно-восстановительные</div></li>
                <li><div class="r"><button class="ex p"></button><svg><use href="#book"/></svg>Отдел 52. Реставрационно-восстановительные</div></li>
                <li><div class="r"><button class="ex p"></button><svg><use href="#book"/></svg>Отдел 53. Реставрационно-восстановительные</div></li>
                <li><div class="r"><button class="ex p"></button><svg><use href="#book"/></svg>Отдел 54. Реставрационно-восстановительные</div></li>
              </ul>
              <div class="vs"><svg class="cv"><use href="#cu"/></svg><div class="thumb th-comp"></div><svg class="cv"><use href="#cd"/></svg></div>
            </div>
            <div class="hs"><svg class="ch"><use href="#cl"/></svg><div class="thumb hw"></div><svg class="ch end"><use href="#cr"/></svg></div>
          </div>
        </div>
        <div class="grid">
          <div class="gridrow">
            <div class="clip">
              <table class="norms">
                <colgroup><col class="c-ind"><col class="c-s"><col class="c-code"><col class="c-name"><col class="c-unit"><col class="c-cost"><col class="c-cost"></colgroup>
                <thead><tr><th></th><th>С..</th><th>Обоснование<svg class="sort" viewBox="0 0 8 8"><path d="M7 .5H.5L4 7" fill="none" stroke="#888"/><path d="M7 .5L4 7" stroke="#fff"/></svg></th><th>Наименование</th><th>Единица<br>измерения</th><th>Прямые<br>затраты</th><th>Зарпл.<br>плата<br>строит.</th></tr></thead>
                <tbody>
                <tr><td></td><td></td><td>1.50-3203-53-2/1</td><td>Устройство ограждения пандуса (бетонного) с 2-х сторон из<br>полированной нержавеющей стали на стойках с двойным</td><td>10 м</td><td>27 702,47</td><td>7 316,20</td></tr>
                <tr><td></td><td></td><td>1.50-3203-53-1/1</td><td>Устройство настенного двойного поручня на кронштейнах из<br>полированной нержавеющей стали</td><td>10 м</td><td>19 805,65</td><td>4 012,10</td></tr>
                <tr><td class="ptr"></td><td></td><td class="cell-sel">1.50-3203-52-3/1</td><td>Установка опорного поручня к раковине на 2-х стойках и<br>креплением к стене в 2-х точках</td><td>компл.</td><td>272,91</td><td>193,10</td></tr>
                <tr><td></td><td></td><td>1.50-3203-52-2/1</td><td>Установка опорного поручня типа "турникет" к унитазу</td><td>компл.</td><td>238,11</td><td>178,40</td></tr>
                <tr><td></td><td></td><td>1.50-3203-52-1/1</td><td>Установка опорного поручня типа "скоба"</td><td>компл.</td><td>208,15</td><td>148,20</td></tr>
                <tr><td></td><td></td><td>1.50-3203-51-1/1</td><td>Устройство водоотводных лотков из 1/2 асбестоцементных<br>труб на отмостке</td><td>10 м</td><td>2 917,52</td><td>514,10</td></tr>
                <tr><td></td><td></td><td>1.50-3203-50-2/1</td><td>Установка гарнитуры туалетной полочек</td><td>шт.</td><td>360,84</td><td>148,30</td></tr>
                <tr><td></td><td></td><td>1.50-3203-50-1/1</td><td>Установка гарнитуры туалетной вешалок, подстаканников,<br>поручней для ванн и т.п.</td><td>шт.</td><td>484,54</td><td>65,20</td></tr>
                <tr><td></td><td></td><td>1.50-3203-49-8/1</td><td>Установка шкафов металлических для<br>санитарно-технических систем на полу, шкаф массой свыше</td><td>шт.</td><td>410,96</td><td>372,10</td></tr>
                <tr><td></td><td></td><td>1.50-3203-49-7/1</td><td>Установка шкафов металлических для<br>санитарно-технических систем на полу, шкаф массой до 30</td><td>шт.</td><td>4 454,04</td><td>315,10</td></tr>
                <tr><td></td><td></td><td>1.50-3203-49-6/1</td><td>Установка шкафов металлических для<br>санитарно-технических систем на полу, шкаф массой до 20</td><td>шт.</td><td>2 306,69</td><td>247,10</td></tr>
                <tr><td></td><td></td><td>1.50-3203-49-5/1</td><td>Установка шкафов металлических для<br>санитарно-технических систем на полу, шкаф массой до 10</td><td>шт.</td><td>1 765,41</td><td>184,10</td></tr>
                <tr><td></td><td></td><td>1.50-3203-49-4/1</td><td>Установка шкафов металлических для<br>санитарно-технических систем на стене или в нише, шкаф</td><td>шт.</td><td>575,73</td><td>537,10</td></tr>
                </tbody>
              </table>
            </div>
            <div class="vs"><svg class="cv"><use href="#cu"/></svg><div class="thumb th-grid"></div><svg class="cv end"><use href="#cd"/></svg></div>
          </div>
          <div class="hs"><svg class="ch"><use href="#cl"/></svg><div class="thumb"></div><svg class="ch end"><use href="#cr"/></svg></div>
        </div>
      </div>
      <div class="lower">
        <div class="vdock"><button aria-label="Закрыть"><svg><use href="#wcls"/></svg></button><span></span></div>
        <div class="res">
          <div class="tabs"><button class="tab">Полное наименование</button><button class="tab">Состав работ</button><button class="tab sel">Ресурсы</button></div>
          <div class="page">
            <h2><svg><use href="#digits"/></svg><span>Сметные нормы списания</span><span>[Коды ОКП для СН-2012 - 2017 г.]</span></h2>
            <div class="gridrow white">
              <div class="clip">
                <table class="rs">
                  <colgroup><col class="c-ind"><col class="c-rs"><col class="r-type"><col class="r-chk"><col class="r-code"><col class="r-name"><col class="r-71"><col class="r-65"><col class="r-65"><col class="r-65"><col class="r-71"><col class="r-71"></colgroup>
                  <thead><tr><th></th><th>С..</th><th>Тип</th><th>Учтён в<br>цене</th><th>Обоснование</th><th>Наименование</th><th>Ед.изм.</th><th>Расход</th><th>Процент</th><th>Стоимость</th><th>Вид ресурса</th><th>Тип<br>трудозатрат</th></tr></thead>
                  <tbody>
                    <tr class="green"><td class="ptr"></td><td class="dark"></td><td><svg><use href="#worker"/></svg></td><td><input type="checkbox" checked aria-label="Учтён"></td><td>9999990008</td><td>Трудозатраты рабочих</td><td>чел.-ч.</td><td>1,16</td><td class="pct"><div style="--p:0%">0%</div></td><td>0</td><td>Обычные</td><td></td></tr>
                    <tr class="blue"><td></td><td></td><td><svg><use href="#truck"/></svg></td><td><input type="checkbox" checked aria-label="Учтён"></td><td>304104</td><td>Перфораторы электрические, мощность до 800 Вт</td><td>маш.-ч</td><td>0,44</td><td class="pct"><div class="over" style="--p:76.6%">76,60%</div></td><td>3,09</td><td>Обычные</td><td></td></tr>
                    <tr class="blue"><td></td><td></td><td><svg><use href="#truck"/></svg></td><td><input type="checkbox" checked aria-label="Учтён"></td><td>309101</td><td>Шуруповерты</td><td>маш.-ч</td><td>0,21</td><td class="pct"><div style="--p:23.4%">23,40%</div></td><td>0,95</td><td>Обычные</td><td></td></tr>
                    <tr class="pink"><td></td><td></td><td><svg><use href="#bricks"/></svg></td><td><input type="checkbox" checked aria-label="Учтён"></td><td>3972281001</td><td>Сверло победитовое, диаметр 8 мм, длина 80 мм</td><td>шт.</td><td>0,8</td><td class="pct"><div class="over" style="--p:100%">100%</div></td><td>75,36</td><td>Обычные</td><td></td></tr>
                  </tbody>
                </table>
              </div>
              <div class="vs"><svg class="cv"><use href="#cu"/></svg><div class="thumb th-res"></div></div>
            </div>
          </div>
        </div>
      </div>
    </section>
  </main>
</section>
</body>
</html>
```

FILE: styles.css
```css
* { box-sizing: border-box; }
:root {
  --face: #f0f0f0;
  --line: #a0a0a0;
  --dark: #696969;
  --ui: "Open Sans", "Noto Sans", "Liberation Sans", sans-serif;
  --grid: "Liberation Sans", Arial, sans-serif;
}
html, body { height: 100%; margin: 0; }
body { display: flex; flex-direction: column; background: var(--face); color: #000; font: 11px/13px var(--grid); overflow: hidden; }
button, input, select { font: inherit; color: inherit; margin: 0; padding: 0; border: 0; background: none; border-radius: 0; }
svg { width: 16px; height: 16px; flex: none; display: block; }
.defs { position: absolute; width: 0; height: 0; }
ul { list-style: none; margin: 0; padding: 0; }

.win { display: flex; flex-direction: column; background: var(--face); overflow: hidden; }
.win-back { flex: 0 0 193px; }
.win-front { flex: 1; min-height: 0; }

/* title and menu */
.title { display: flex; align-items: center; gap: 5px; height: 24px; padding-left: 2px; background: #fff; border-bottom: 1px solid var(--line); font: 11px/16px var(--ui); flex: none; }
.title h1 { margin: 0; font: inherit; flex: 1; white-space: pre; }
.wctl { display: flex; padding-right: 2px; }
.wctl button { width: 46px; height: 20px; display: grid; place-items: center; }
.wctl svg, .mctl svg { width: 10px; height: 10px; }
.menu { display: flex; align-items: center; height: 25px; padding-left: 12px; border-top: 1px solid #fff; border-bottom: 1px solid var(--line); border-left: 1px solid var(--line); font: 11px/16px var(--ui); flex: none; }
.menu > button { padding: 0 7px 0 6px; }
.mctl { display: flex; margin-left: auto; padding-right: 2px; }
.mctl button { width: 17px; height: 15px; display: grid; place-items: center; border: 1px solid; border-color: #fff var(--dark) var(--dark) #fff; }
.mctl button:last-child { margin-left: 3px; }

/* toolbars */
.grip { background-image: linear-gradient(90deg, #fff 1px, var(--line) 1px 2px, transparent 2px 3px, #fff 3px 4px, var(--line) 4px 5px); background-size: 5px 20px; background-position: 4px 2px; background-repeat: no-repeat; }
.bar { display: flex; height: 26px; padding-left: 1px; border-left: 1px solid var(--line); flex: none; }
.grp { display: flex; align-items: center; padding: 0 2px 0 10px; border: 1px solid; border-color: #fff var(--line) var(--line) transparent; border-left: 0; white-space: nowrap; }
.apart { margin-left: 23px; }
.b { width: 23px; height: 22px; display: grid; place-items: center; flex: none; }
.b:disabled svg { filter: grayscale(1) opacity(.75); }
.dn text { font: bold 8px var(--grid); fill: #223; }
hr { width: 6px; height: 22px; margin: 0; border: 0; flex: none; background: linear-gradient(90deg, transparent 2px, var(--line) 2px 3px, #fff 3px 4px, transparent 4px); }
.t { height: 22px; padding: 0 5px 0 4px; border: 1px solid transparent; font: 11px/18px var(--ui); white-space: nowrap; flex: none; }
.t:disabled { color: #a0a0a0; }
.on { padding-top: 2px; background: #f9f9f9; border-color: var(--line) #fff #fff var(--line); }
.dd { display: flex; align-items: center; gap: 6px; padding-right: 1px; }
.dd svg { width: 7px; height: 4px; }
.level { width: 297px; height: 17px; margin-left: 6px; padding: 0 16px 0 3px; font: 11px/16px var(--ui); appearance: none; background: #fff url("data:image/svg+xml,%3Csvg xmlns='http://www.w3.org/2000/svg' viewBox='0 0 7 4'%3E%3Cpath d='M0 0h7L3.500 4z'/%3E%3C/svg%3E") right 4px center / 6px 4px no-repeat; }
.cat .t { padding: 0 7px 0 6px; }
.cat .t:first-child { padding: 0 6px 0 5px; }
.cat .t.on { padding-top: 2px; }
.cat .grp { border-top: 2px solid #fff; }
.act .t { padding-right: 6px; }

/* formula line */
.formula { display: flex; align-items: center; height: 21px; margin: 1px 4px 0 0; border: 1px solid var(--line); border-left-color: #fff; background: #eee; flex: none; }
.formula input { width: 117px; height: 17px; margin-left: 2px; padding-left: 2px; background: #fff; border: 1px solid var(--dark); }
.cell { width: 60px; height: 19px; margin-left: 2px; border: solid var(--line); border-width: 0 1px; }
.fill { flex: 1; }
.spin { width: 22px; height: 19px; border-left: 1px solid #fff; overflow: hidden; opacity: .5; }
.spin svg { width: 15px; height: 10px; }
.redx svg { width: 14px; height: 14px; margin-right: 4px; }

/* estimate behind the manager */
.back { flex: 1; display: grid; grid-template-columns: 1434fr 486fr; margin-top: 3px; min-height: 0; }
.est { min-width: 0; border-right: 2px solid #808080; border-top: 1px solid #fff; padding: 4px 5px 0 4px; }
.crit { display: flex; align-items: center; height: 26px; border: solid var(--line); border-width: 1px 0; }
.crit .b { width: 26px; }
.crit > svg { margin: 0 5px; }
.crit span { flex: 1; }
.crit .redx svg { margin-right: 2px; }
.esthead { display: flex; height: 60px; border-left: 1px solid var(--line); }
.ec { display: flex; align-items: center; padding: 0 1px 9px 2px; border-right: 1px solid #808080; white-space: nowrap; overflow: hidden; }
.e0 { width: 13px; }
.e1 { width: 18px; }
.e2 { width: 38px; }
.e3 { width: 75px; }
.e4 { width: 292px; }
.e5 { width: 51px; }
.qty { width: 103px; border-right: 1px solid #808080; }
.qty div { height: 18px; padding: 2px; border-bottom: 1px solid #808080; }
.qty p, .lvl p { display: flex; margin: 0; height: 42px; }
.qty p span { flex: 1; padding: 3px 2px; line-height: 13px; }
.qty p span:first-child { padding-top: 9px; border-right: 1px solid #808080; }
.lvl { flex: 1; min-width: 0; }
.lvl div { height: 31px; padding: 9px 2px; border-bottom: 1px solid #808080; }
.lvl p span { flex: 1; padding: 0 2px; line-height: 13px; background: #c3dbc5; border-right: 1px solid #808080; }
.lvl p .or { background: #efc9ab; }
.side { min-width: 0; padding: 4px 4px 0 5px; }
.dock { display: flex; align-items: center; height: 11px; gap: 1px; }
.dock span { flex: 1; height: 6px; border: solid var(--line); border-width: 1px 1px 1px 0; background: #f6f6f6; }
.dock button, .vdock button { width: 11px; height: 11px; display: grid; place-items: center; border: 1px solid; border-color: #fff var(--dark) var(--dark) #fff; }
.dock svg, .vdock svg { width: 6px; height: 6px; }
.side .page { padding: 2px 2px 0; }

/* tabs and pages */
.tabs { display: flex; align-items: flex-end; height: 20px; flex: none; }
.tab { height: 18px; padding: 0 4px; border: 1px solid #fff; border-right: 2px solid var(--dark); border-bottom: 0; white-space: nowrap; margin-right: 1px; }
.tab.sel { height: 20px; padding: 0 5px 2px; }
.page { flex: 1; min-height: 0; border-top: 1px solid #fff; border-left: 1px solid #fff; border-right: 2px solid var(--dark); }

/* grids */
table { border-collapse: separate; border-spacing: 0; table-layout: fixed; }
th { font-weight: 400; text-align: left; background: var(--face); white-space: nowrap; overflow: hidden; border-right: 1px solid #808080; border-bottom: 1px solid #808080; padding: 0 3px; }
th:first-child { padding: 0; }
td { white-space: nowrap; overflow: hidden; vertical-align: top; }
td:first-child { background: var(--face); }
.obj { width: 100%; background: #fff; border: 1px solid var(--line); }
.obj th { height: 18px; padding: 0 2px; border-right: 1px solid var(--line); border-bottom: 1px solid var(--line); }
.o2 { width: 113px; }
.o3 { width: 89px; }
.obj td { padding: 2px; text-align: center; }
.obj .nm { display: flex; gap: 2px; padding: 1px 2px 2px 17px; background: var(--face); }
input[type=checkbox] { appearance: none; display: block; width: 11px; height: 11px; margin: 0 auto; border: 1px solid #777; background: #fff url("data:image/svg+xml,%3Csvg xmlns='http://www.w3.org/2000/svg' viewBox='0 0 9 9'%3E%3Cpath d='M1.500 4l2 2.500 4-5' fill='none' stroke='black' stroke-width='1.700'/%3E%3C/svg%3E"); }

/* work area */
.work { flex: 1; min-height: 0; display: grid; grid-template-columns: 939fr 977fr; border-right: 4px solid #808080; }
.left, .right { display: flex; flex-direction: column; min-width: 0; min-height: 0; }
.left { padding: 0 2px 0 1px; }
.left .page { display: flex; padding: 2px 4px 0 2px; }
.sunk { flex: 1; min-width: 0; min-height: 0; display: flex; background: #fff; border: solid #808080; border-width: 2px 0 0 2px; }
.left .tab.sel { padding: 0 6px 2px; }
.tv { flex: 1; min-width: 0; overflow: hidden; white-space: nowrap; line-height: 16px; }
.tv ul { margin-left: 19px; }
.tv li { background: repeating-linear-gradient(#808080 0 1px, transparent 1px 2px) 8px 0 / 1px 100% no-repeat; }
.tv li.last { background-size: 1px 8px; }
.r { display: flex; align-items: center; height: 16px; gap: 4px; padding-left: 4px; background: repeating-linear-gradient(90deg, #808080 0 1px, transparent 1px 2px) 8px 8px / 12px 1px no-repeat; }
.r.lf { padding-left: 20px; }
.ex { width: 9px; height: 9px; flex: none; margin-right: 3px; border: 1px solid #808080; background: linear-gradient(#000, #000) center / 5px 1px no-repeat #fff; }
.ex.p { background: linear-gradient(#000, #000) center / 5px 1px no-repeat, linear-gradient(#000, #000) center / 1px 5px no-repeat #fff; }
.cnt { color: #0000a8; margin-left: 2px; }
.cur { background: var(--face); flex: 1; }

/* scroll bars */
.vs { width: 16px; display: flex; flex-direction: column; background: var(--face); flex: none; }
.hs { height: 16px; display: flex; background: var(--face); flex: none; }
.cv { width: 15px; height: 17px; }
.ch { width: 17px; height: 15px; }
.thumb { background: #cdcdcd; flex: none; }
.vs .thumb { width: 15px; }
.hs .thumb { width: 17px; height: 15px; }
.vs .end { margin-top: auto; }
.hs .end { margin-left: auto; margin-right: 16px; }
.hs .hw { width: 50px; }
.th-main { height: 54px; margin-top: auto; }
.th-comp { height: 65px; margin-top: auto; margin-bottom: 14px; }
.th-grid { height: 17px; margin-top: 188px; }
.th-res { height: 139px; }

/* composition and norms */
.right .tab.sel { padding: 0 5px 2px 7px; }
.filters { margin-left: auto; display: flex; gap: 5px; padding-right: 6px; align-self: flex-start; }
.flt { width: 304px; height: 20px; padding: 0 2px; background: #fff; border: 1px solid; border-color: var(--dark) #fff #fff var(--dark); }
.unit { width: 160px; height: 20px; padding: 0 18px 0 3px; border: 1px solid; border-color: var(--line) #fff #fff var(--line); appearance: none; background: #fff url("data:image/svg+xml,%3Csvg xmlns='http://www.w3.org/2000/svg' viewBox='0 0 15 18'%3E%3Cpath d='M0 0h15v18H0z' fill='%23f0f0f0'/%3E%3Cpath d='M0 17.500h14.500V0' fill='none' stroke='%23696969'/%3E%3Cpath d='M4 7h7l-3.500 4z'/%3E%3C/svg%3E") right center / 15px 18px no-repeat; }
.upper { display: flex; padding: 4px 5px 0 7px; }
.comp { width: 263px; display: flex; flex-direction: column; flex: none; padding-bottom: 4px; }
.mini { display: flex; align-items: center; height: 31px; flex: none; }
.comp .sunk { flex-direction: column; }
.tvcol { display: flex; flex: 1; min-height: 0; }
.grid { flex: 1; min-width: 0; display: flex; flex-direction: column; margin-left: 3px; border-left: 1px solid var(--line); padding: 1px 0 3px 2px; }
.gridrow { flex: 1; min-height: 0; display: flex; border: solid var(--line); border-width: 1px 0 0 1px; background: #fff; }
.clip { flex: 1; min-width: 0; overflow: hidden; }
.norms { width: 726px; }
.c-ind { width: 12px; }
.c-s { width: 17px; }
.c-code { width: 142px; }
.c-name { width: 321px; }
.c-unit { width: 94px; }
.c-cost { width: 70px; }
.norms th { height: 55px; }
.norms td { height: 28px; padding: 1px 3px 0; border-right: 1px solid #c0c0c0; border-bottom: 1px solid #c0c0c0; line-height: 13px; }
.norms td:nth-child(-n+3) { border-color: #808080; }
.norms td.cell-sel { background: #3399ff; color: #fff; outline: 1px dotted #402000; outline-offset: -2px; }
.norms td.ptr, .rs td.ptr { padding: 0; background: conic-gradient(from 225deg at 100% 50%, #000 90deg, transparent 0) 3px center / 6px 11px no-repeat var(--face); }
.sort { float: right; width: 8px; height: 8px; margin: 2px 4px 0 0; }

/* resources */
.lower { height: 224px; display: flex; border-top: 1px solid var(--line); padding: 4px 6px 0 8px; flex: none; }
.vdock { width: 12px; display: flex; flex-direction: column; align-items: center; gap: 3px; }
.vdock span { flex: 1; width: 4px; border: solid var(--line); border-width: 0 1px; background: #fff; }
.res { flex: 1; min-width: 0; display: flex; flex-direction: column; margin-left: 1px; }
.res .tabs { padding-left: 1px; }
.res .tabs .tab.sel { padding-left: 5px; }
.res .page { display: flex; flex-direction: column; padding: 0 4px 0 2px; }
h2 { display: flex; align-items: center; gap: 16px; height: 30px; margin: 0; padding-left: 7px; font: bold 12px/16px var(--grid); flex: none; }
h2 svg { width: 18px; height: 18px; margin-right: 11px; font: 9px var(--grid); }
.rs { width: 936px; }
.rs th { height: 31px; }
.c-rs { width: 18px; }
.r-type { width: 30px; }
.r-chk { width: 46px; }
.r-code { width: 121px; }
.r-name { width: 300px; }
.r-71 { width: 71px; }
.r-65 { width: 65px; }
.rs td { height: 16px; padding: 1px 3px 0; border-right: 1px solid #c0c0c0; border-bottom: 1px solid #c0c0c0; }
.rs td svg { width: 16px; height: 14px; margin: 0 auto; }
.rs td:first-child { border-color: #808080; }
.rs .green { background: #d8ffec; }
.rs .blue { background: #d6e9ff; }
.rs .pink { background: #ffe9e9; }
.rs .dark { background: #a0a0a0; }
.rs .pct { background: #fff; }
.pct div { height: 12px; line-height: 13px; text-align: center; background: linear-gradient(#b8b8cc, #b8b8cc) 0 0 / var(--p) 100% no-repeat; }
.pct .over { color: #555; }
```
